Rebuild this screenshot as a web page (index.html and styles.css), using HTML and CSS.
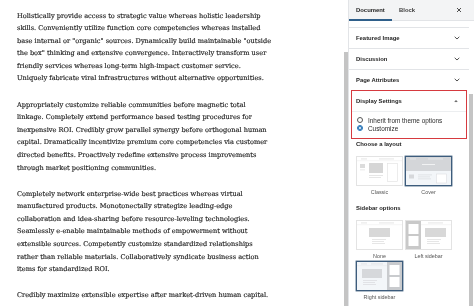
FILE: index.html
```html
<!DOCTYPE html>
<html lang="en">
<head>
  <meta charset="UTF-8" />
  <title>Editor - Display Settings</title>
  <link rel="stylesheet" href="styles.css">
</head>
<body>
  <div class="screen">

    <main class="editor">
      <p>Holistically provide access to strategic value whereas holistic leadership<br>
      skills. Conveniently utilize function core competencies whereas installed<br>
      base internal or "organic" sources. Dynamically build maintainable "outside<br>
      the box" thinking and extensive convergence. Interactively transform user<br>
      friendly services whereas long-term high-impact customer service.<br>
      Uniquely fabricate viral infrastructures without alternative opportunities.</p>
      <p>Appropriately customize reliable communities before magnetic total<br>
      linkage. Completely extend performance based testing procedures for<br>
      inexpensive ROI. Credibly grow parallel synergy before orthogonal human<br>
      capital. Dramatically incentivize premium core competencies via customer<br>
      directed benefits. Proactively redefine extensive process improvements<br>
      through market positioning communities.</p>
      <p>Completely network enterprise-wide best practices whereas virtual<br>
      manufactured products. Monotonectally strategize leading-edge<br>
      collaboration and idea-sharing before resource-leveling technologies.<br>
      Seamlessly e-enable maintainable methods of empowerment without<br>
      extensible sources. Competently customize standardized relationships<br>
      rather than reliable materials. Collaboratively syndicate business action<br>
      items for standardized ROI.</p>
      <p>Credibly maximize extensible expertise after market-driven human capital.</p>
    </main>

    <div class="scrollbar editor-scroll"><div class="thumb"></div></div>

    <aside class="sidebar">
      <div class="tabs">
        <span class="tab active">Document</span>
        <span class="tab">Block</span>
        <span class="close">
          <svg width="6" height="6" viewBox="0 0 6 6"><path d="M1 1L5 5M5 1L1 5" stroke="#3c3c3c" stroke-width="0.9"/></svg>
        </span>
      </div>

      <div class="sidebar-main">
        <div class="sidebar-body">
          <div class="panel-tail"></div>

          <div class="panel-row">
            <span>Featured Image</span>
            <svg class="chev" width="6" height="4" viewBox="0 0 6 4"><path d="M0.7 0.8L3 3L5.3 0.8" fill="none" stroke="#3c3c3c" stroke-width="0.9"/></svg>
          </div>
          <div class="panel-row">
            <span>Discussion</span>
            <svg class="chev" width="6" height="4" viewBox="0 0 6 4"><path d="M0.7 0.8L3 3L5.3 0.8" fill="none" stroke="#3c3c3c" stroke-width="0.9"/></svg>
          </div>
          <div class="panel-row">
            <span>Page Attributes</span>
            <svg class="chev" width="6" height="4" viewBox="0 0 6 4"><path d="M0.7 0.8L3 3L5.3 0.8" fill="none" stroke="#3c3c3c" stroke-width="0.9"/></svg>
          </div>

          <section class="display-settings">
            <div class="panel-row open">
              <span>Display Settings</span>
              <svg class="chev" width="6" height="4" viewBox="0 0 6 4"><path d="M1.8 2.6L3 1.4L4.2 2.6Z" fill="#3c3c3c" stroke="#3c3c3c" stroke-width="0.5"/></svg>
            </div>
            <div class="radios">
              <label class="radio"><span class="dot"></span>Inherit from theme options</label>
              <label class="radio checked"><span class="dot"></span>Customize</label>
            </div>
          </section>

          <div class="option-group">
            <h4>Choose a layout</h4>
            <div class="choices">
              <figure class="choice">
                <div class="thumb-box">
                  <svg viewBox="0 0 45 28" width="45" height="28">
                    <rect x="4" y="1.6" width="6" height="0.7" fill="#d9d9d9"/>
                    <rect x="22" y="1.6" width="15" height="0.7" fill="#d9d9d9"/>
                    <rect x="0" y="3.6" width="45" height="0.5" fill="#ececec"/>
                    <rect x="3" y="7" width="5" height="4" fill="#dcdcdc"/>
                    <rect x="3" y="12.5" width="5" height="0.8" fill="#e3e3e3"/>
                    <rect x="12" y="6" width="14" height="10" fill="#d6d6d6"/>
                    <rect x="12" y="18" width="14" height="0.8" fill="#e0e0e0"/>
                    <rect x="12" y="20" width="12" height="0.8" fill="#e0e0e0"/>
                    <rect x="30.5" y="6.5" width="10" height="18" fill="#fff" stroke="#e0e0e0" stroke-width="0.6"/>
                  </svg>
                </div>
                <figcaption>Classic</figcaption>
              </figure>
              <figure class="choice selected">
                <div class="thumb-box">
                  <svg viewBox="0 0 45 28" width="45" height="28">
                    <rect x="0" y="0" width="45" height="14" fill="#d4d6d9"/>
                    <rect x="4" y="1.6" width="6" height="0.7" fill="#eef0f2"/>
                    <rect x="22" y="1.6" width="15" height="0.7" fill="#eef0f2"/>
                    <rect x="16" y="7" width="13" height="0.9" fill="#f4f5f6"/>
                    <rect x="3" y="17.5" width="5" height="4" fill="#d6d8db"/>
                    <rect x="12" y="17.5" width="14" height="0.8" fill="#dcdee1"/>
                    <rect x="12" y="19.5" width="12" height="0.8" fill="#dcdee1"/>
                    <rect x="12" y="21.5" width="13" height="0.8" fill="#dcdee1"/>
                    <rect x="30.5" y="17" width="10" height="9" fill="#fff" stroke="#dcdee1" stroke-width="0.6"/>
                  </svg>
                </div>
                <figcaption>Cover</figcaption>
              </figure>
            </div>
          </div>

          <div class="option-group">
            <h4>Sidebar options</h4>
            <div class="choices">
              <figure class="choice">
                <div class="thumb-box">
                  <svg viewBox="0 0 45 28" width="45" height="28">
                    <rect x="4" y="1.6" width="6" height="0.7" fill="#d9d9d9"/>
                    <rect x="22" y="1.6" width="15" height="0.7" fill="#d9d9d9"/>
                    <rect x="0" y="3.6" width="45" height="0.5" fill="#ececec"/>
                    <rect x="12" y="7" width="21" height="9" fill="#d8d8d8"/>
                    <rect x="15" y="18" width="14" height="0.8" fill="#e0e0e0"/>
                    <rect x="15" y="20" width="12" height="0.8" fill="#e0e0e0"/>
                    <rect x="15" y="22" width="13" height="0.8" fill="#e0e0e0"/>
                  </svg>
                </div>
                <figcaption>None</figcaption>
              </figure>
              <figure class="choice">
                <div class="thumb-box">
                  <svg viewBox="0 0 45 28" width="45" height="28">
                    <rect x="0" y="0" width="15" height="28" fill="#c9c9c9"/>
                    <rect x="2.5" y="3" width="10" height="10" fill="#fff"/>
                    <rect x="2.5" y="15" width="10" height="10" fill="#fff"/>
                    <rect x="22" y="1.6" width="15" height="0.7" fill="#d9d9d9"/>
                    <rect x="15" y="3.6" width="30" height="0.5" fill="#ececec"/>
                    <rect x="19" y="7" width="21" height="9" fill="#d8d8d8"/>
                    <rect x="21" y="18" width="14" height="0.8" fill="#e0e0e0"/>
                    <rect x="21" y="20" width="12" height="0.8" fill="#e0e0e0"/>
                    <rect x="21" y="22" width="13" height="0.8" fill="#e0e0e0"/>
                  </svg>
                </div>
                <figcaption>Left sidebar</figcaption>
              </figure>
              <figure class="choice selected">
                <div class="thumb-box">
                  <svg viewBox="0 0 45 28" width="45" height="28">
                    <rect x="4" y="1.6" width="6" height="0.7" fill="#d9dbde"/>
                    <rect x="14" y="1.6" width="12" height="0.7" fill="#d9dbde"/>
                    <rect x="0" y="3.6" width="30" height="0.5" fill="#e6e8eb"/>
                    <rect x="30" y="0" width="15" height="28" fill="#c9cbce"/>
                    <rect x="32.5" y="3" width="10" height="10" fill="#fff"/>
                    <rect x="32.5" y="15" width="10" height="10" fill="#fff"/>
                    <rect x="5" y="7" width="20" height="9" fill="#d6d8db"/>
                    <rect x="6" y="18" width="14" height="0.8" fill="#dcdee1"/>
                    <rect x="6" y="20" width="12" height="0.8" fill="#dcdee1"/>
                    <rect x="6" y="22" width="13" height="0.8" fill="#dcdee1"/>
                  </svg>
                </div>
                <figcaption>Right sidebar</figcaption>
              </figure>
            </div>
          </div>
        </div>

        <div class="scrollbar sidebar-scroll"><div class="thumb"></div></div>
      </div>
    </aside>

  </div>
</body>
</html>
```

FILE: styles.css
```css
* {
  margin: 0;
  padding: 0;
  box-sizing: border-box;
}

html, body {
  width: 474px;
  height: 306px;
  overflow: hidden;
  background-color: #ffffff;
  -webkit-font-smoothing: antialiased;
}

.screen {
  display: flex;
  height: 306px;
}

/* editor text */
.editor {
  width: 344px;
  padding: 9.5px 0 0 17px;
  font-family: 'DejaVu Serif', serif;
  font-size: 6.6px;
  line-height: 12.6px;
  color: #222222;
  -webkit-text-stroke: 0.15px #222222;
  white-space: nowrap;
  overflow: hidden;
  will-change: transform;
}
.editor p {
  margin-bottom: 13.5px;
}

/* scrollbars */
.scrollbar {
  width: 4px;
  display: flex;
  flex-direction: column;
}
.scrollbar .thumb {
  flex: 1;
  background-color: #c4c4c4;
}
.editor-scroll {
  padding-top: 52px;
}
.sidebar-scroll {
  width: 5px;
  padding: 73px 1px 0 0;
}

/* sidebar */
.sidebar {
  width: 126px;
  border-left: 1px solid #e2e4e7;
  display: flex;
  flex-direction: column;
  font-family: 'Liberation Sans', Arial, sans-serif;
  color: #1e1e1e;
  will-change: transform;
}

.tabs {
  height: 21px;
  display: flex;
  align-items: stretch;
  background-color: #f3f4f5;
  border-bottom: 1px solid #e2e4e7;
}
.tab {
  display: flex;
  align-items: center;
  padding: 0 6px 0 7px;
  font-size: 5.9px;
  font-weight: bold;
  color: #3c3c3c;
  border-bottom: 2px solid transparent;
  margin-bottom: -1px;
}
.tab.active {
  color: #1e1e1e;
  border-bottom-color: #2f5f8a;
  width: 43px;
}
.close {
  margin-left: auto;
  margin-right: 12px;
  display: flex;
  align-items: center;
}

.sidebar-main {
  flex: 1;
  display: flex;
  min-height: 0;
}
.sidebar-body {
  width: 120px;
  overflow: hidden;
}

.panel-tail {
  height: 6px;
}

.panel-row {
  height: 21px;
  border-top: 1px solid #e2e4e7;
  display: flex;
  align-items: center;
  justify-content: space-between;
  padding: 0 9px 0 7px;
  font-size: 5.9px;
  font-weight: bold;
}

.display-settings {
  margin: 0 2px;
  border: 1.2px solid #d63a3f;
}
.display-settings .panel-row {
  border-top: none;
  height: 21px;
  padding: 0 7px 0 4px;
  border-bottom: 1px solid #eceef0;
}
.radios {
  padding: 5px 0 6.5px 5px;
  display: flex;
  flex-direction: column;
  gap: 2px;
}
.radio {
  display: flex;
  align-items: center;
  gap: 5px;
  font-size: 6.4px;
  color: #2c2c2c;
  height: 6px;
}
.radio .dot {
  width: 6px;
  height: 6px;
  border-radius: 50%;
  border: 0.9px solid #555;
  background-color: #fff;
}
.radio.checked .dot {
  border: 1.8px solid #1f6fb5;
  background-color: #fff;
  box-shadow: inset 0 0 0 1px #1f6fb5;
}

.option-group {
  padding: 2px 0 0 7px;
}
.option-group + .option-group {
  padding-top: 10.5px;
}
.option-group h4 {
  font-size: 5.9px;
  font-weight: bold;
  line-height: 7px;
  margin-bottom: 8px;
}
.choices {
  display: grid;
  grid-template-columns: 47px 47px;
  column-gap: 2px;
  row-gap: 2px;
}
.choice {
  display: flex;
  flex-direction: column;
  align-items: center;
}
.thumb-box {
  width: 47px;
  height: 30px;
  border: 1px solid #e3e3e3;
  background-color: #fff;
  overflow: hidden;
}
.thumb-box svg {
  display: block;
}
.choice.selected .thumb-box {
  border: 1px solid #3d5c7c;
  box-shadow: 0 0 0 0.4px #3d5c7c;
  background-color: #f3f6f9;
}
.choice figcaption {
  font-size: 5.4px;
  color: #555;
  line-height: 6px;
  margin-top: 3px;
}
```
